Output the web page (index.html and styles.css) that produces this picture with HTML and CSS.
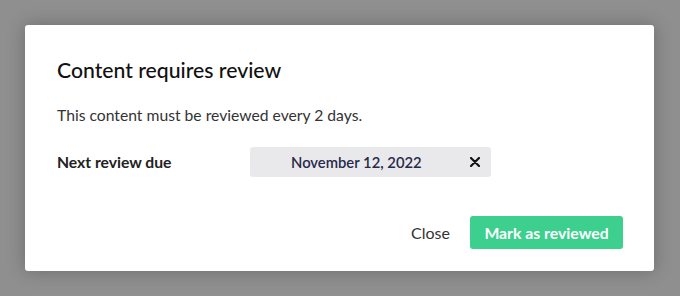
FILE: index.html
```html
<!DOCTYPE html>
<html>
<head>
<meta charset="utf-8">
<link rel="stylesheet" href="styles.css">
</head>
<body>
<div class="modal">
  <h2 class="title">Content requires review</h2>
  <p class="desc">This content must be reviewed every 2 days.</p>
  <div class="row">
    <div class="label">Next review due</div>
    <div class="field">
      <span class="date">November 12, 2022</span>
      <svg class="clear" width="10" height="10" viewBox="0 0 10 10"><path d="M1 1L9 9M9 1L1 9" stroke="#111" stroke-width="2.2" stroke-linecap="round"/></svg>
    </div>
  </div>
  <div class="footer">
    <button class="btn-close">Close</button>
    <button class="btn-primary">Mark as reviewed</button>
  </div>
</div>
</body>
</html>
```
FILE: styles.css
```css
html, body {
  margin: 0;
  padding: 0;
  background: #8f8f8f;
  width: 680px;
  height: 296px;
  overflow: hidden;
  font-family: Lato, "Open Sans", sans-serif;
}
.modal {
  box-sizing: border-box;
  margin: 25px 0 0 25px;
  width: 629px;
  height: 246px;
  background: #fff;
  border-radius: 3px;
  box-shadow: 0 0 18px rgba(0, 0, 0, 0.25);
  padding: 32px 31px 22px 32px;
  display: flex;
  flex-direction: column;
}
.title {
  margin: 0;
  font-size: 21.2px;
  line-height: 26px;
  font-weight: 500;
  color: #111;
}
.desc {
  margin: 22px 0 0;
  font-size: 15.7px;
  line-height: 20px;
  color: #333;
}
.row {
  margin-top: 22px;
  display: flex;
  align-items: center;
}
.label {
  width: 193px;
  font-size: 15.7px;
  font-weight: 700;
  color: #222;
}
.field {
  box-sizing: border-box;
  width: 241px;
  height: 30px;
  background: #e9e9eb;
  border-radius: 3px;
  display: flex;
  align-items: center;
  justify-content: space-between;
  padding: 0 11px 0 41px;
}
.date {
  font-size: 14.8px;
  font-weight: 600;
  color: #272a4c;
}
.clear {
  display: block;
}
.footer {
  margin-top: auto;
  display: flex;
  justify-content: flex-end;
  align-items: center;
  gap: 20px;
}
.btn-close {
  background: none;
  border: 0;
  padding: 0;
  font-family: inherit;
  font-size: 16px;
  color: #333;
}
.btn-primary {
  font-family: inherit;
  width: 153px;
  height: 33px;
  border: 0;
  border-radius: 3px;
  background: #3ccf8e;
  color: #fff;
  font-size: 15.8px;
  font-weight: 700;
}
```
